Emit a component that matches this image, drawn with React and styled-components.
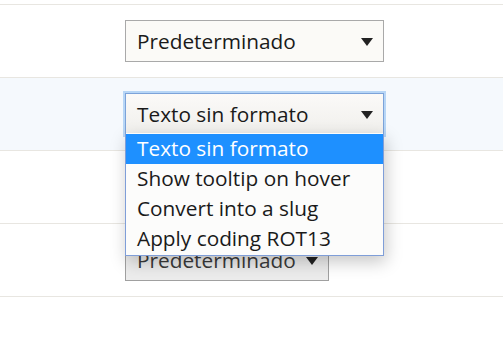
import React from "react";
import styled, { createGlobalStyle } from "styled-components";

const GlobalStyle = createGlobalStyle`
  body {
    margin: 0;
    background: #ffffff;
    font-family: "Open Sans", "Liberation Sans", sans-serif;
  }
`;

const Page = styled.div`
  padding-top: 4px;
  width: 503px;
  height: 352px;
  box-sizing: border-box;
  overflow: hidden;
`;

const Table = styled.div`
  display: flex;
  flex-direction: column;
  border-bottom: 1px solid #e8e6e1;
`;

const Row = styled.div`
  display: grid;
  grid-template-columns: 125px 1fr;
  align-items: center;
  height: 72px;
  border-top: 1px solid #e8e6e1;
  background: ${(p) => (p.active ? "#f5f9fd" : "transparent")};
`;

const Cell = styled.div`
  position: relative;
  display: flex;
  align-items: center;
`;

const Select = styled.div`
  position: relative;
  display: flex;
  align-items: center;
  justify-content: space-between;
  box-sizing: border-box;
  width: ${(p) => p.width}px;
  height: 42px;
  padding: 0 10px 0 11px;
  font-size: 20.8px;
  color: ${(p) => (p.muted ? "#3a3a3a" : "#1a1a1a")};
  border: 1px solid ${(p) => (p.focused ? "#7ca3d9" : p.muted ? "#a0a0a0" : "#a9a9a9")};
  background: ${(p) =>
    p.muted
      ? "#ececec"
      : p.focused
      ? "linear-gradient(#fbfaf8, #f0efec)"
      : "#fbfaf7"};
  box-shadow: ${(p) => (p.focused ? "0 0 0 2px #b7d6f6" : "none")};
`;

const Arrow = styled.span`
  width: 0;
  height: 0;
  border-left: 6px solid transparent;
  border-right: 6px solid transparent;
  border-top: 8px solid #222;
  margin-top: 2px;
`;

const Menu = styled.ul`
  position: absolute;
  top: 40px;
  left: 0;
  z-index: 2;
  width: 259px;
  box-sizing: border-box;
  margin: 0;
  padding: 0 0 1px;
  list-style: none;
  background: #fcfcfb;
  border: 1px solid #7f9ed8;
  border-top: none;
  box-shadow: 2px 6px 16px rgba(0, 0, 0, 0.22);
`;

const Option = styled.li`
  height: 30px;
  line-height: 29px;
  padding: 0 11px;
  font-size: 20.8px;
  color: ${(p) => (p.selected ? "#ffffff" : "#1a1a1a")};
  background: ${(p) => (p.selected ? "#1e90ff" : "transparent")};
  white-space: nowrap;
  &:first-child {
    margin-top: 1px;
  }
`;

const options = [
  "Texto sin formato",
  "Show tooltip on hover",
  "Convert into a slug",
  "Apply coding ROT13",
];

export default function App() {
  return (
    <>
      <GlobalStyle />
      <Page>
        <Table>
          <Row>
            <span />
            <Cell>
              <Select width={259}>
                Predeterminado
                <Arrow />
              </Select>
            </Cell>
          </Row>
          <Row active>
            <span />
            <Cell>
              <Select width={259} focused>
                Texto sin formato
                <Arrow />
              </Select>
              <Menu>
                {options.map((o, i) => (
                  <Option key={o} selected={i === 0}>
                    {o}
                  </Option>
                ))}
              </Menu>
            </Cell>
          </Row>
          <Row>
            <span />
            <Cell>
              <Select width={204}>
                Predeterminado
                <Arrow />
              </Select>
            </Cell>
          </Row>
          <Row>
            <span />
            <Cell>
              <Select width={204} muted>
                Predeterminado
                <Arrow />
              </Select>
            </Cell>
          </Row>
        </Table>
      </Page>
    </>
  );
}
